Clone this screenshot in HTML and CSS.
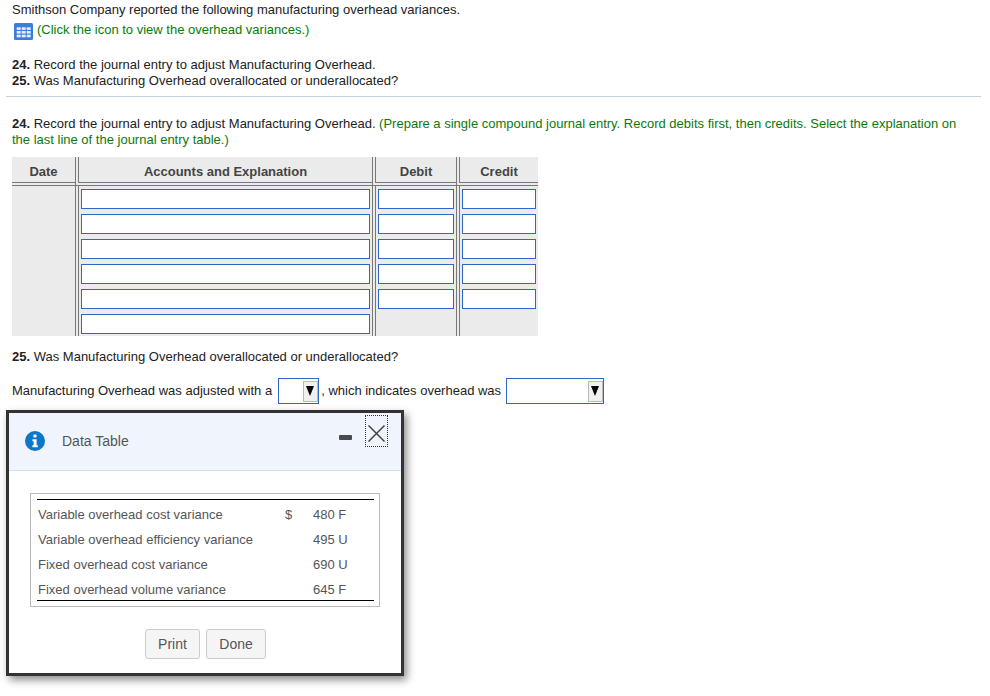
FILE: index.html
```html
<!DOCTYPE html>
<html lang="en">
<head>
    <meta charset="UTF-8">
    <title>Overhead variances</title>
    <link rel="stylesheet" href="styles.css">
</head>
<body>

<div class="question">
    <p class="intro">Smithson Company reported the following manufacturing overhead variances.</p>
    <p class="icon-line">
        <svg class="grid-icon" width="19" height="17" viewBox="0 0 19 17">
            <rect width="19" height="17" rx="1.5" fill="#3b7ddd"/>
            <g fill="#e4eefb">
                <rect x="2.7" y="4.3" width="4" height="2.6"/><rect x="7.7" y="4.3" width="4" height="2.6"/><rect x="12.7" y="4.3" width="4" height="2.6"/>
                <rect x="2.7" y="8" width="4" height="2.6"/><rect x="7.7" y="8" width="4" height="2.6"/><rect x="12.7" y="8" width="4" height="2.6"/>
                <rect x="2.7" y="11.7" width="4" height="2.6"/><rect x="7.7" y="11.7" width="4" height="2.6"/><rect x="12.7" y="11.7" width="4" height="2.6"/>
            </g>
        </svg>
        <span class="green">(Click the icon to view the overhead variances.)</span>
    </p>
    <p class="asks">
        <b>24.</b> Record the journal entry to adjust Manufacturing Overhead.<br>
        <b>25.</b> Was Manufacturing Overhead overallocated or underallocated?
    </p>
</div>

<hr class="divider">

<div class="answer">
    <p class="instructions">
        <b>24.</b> Record the journal entry to adjust Manufacturing Overhead.
        <span class="green">(Prepare a single compound journal entry. Record debits first, then credits. Select the explanation on the last line of the journal entry table.)</span>
    </p>

    <table class="journal">
        <thead>
            <tr>
                <th class="col-date">Date</th>
                <th class="col-account">Accounts and Explanation</th>
                <th class="col-debit">Debit</th>
                <th class="col-credit">Credit</th>
            </tr>
        </thead>
        <tbody>
            <tr><td></td><td><div class="box"></div></td><td><div class="box"></div></td><td><div class="box"></div></td></tr>
            <tr><td></td><td><div class="box"></div></td><td><div class="box"></div></td><td><div class="box"></div></td></tr>
            <tr><td></td><td><div class="box"></div></td><td><div class="box"></div></td><td><div class="box"></div></td></tr>
            <tr><td></td><td><div class="box"></div></td><td><div class="box"></div></td><td><div class="box"></div></td></tr>
            <tr><td></td><td><div class="box"></div></td><td><div class="box"></div></td><td><div class="box"></div></td></tr>
            <tr><td></td><td><div class="box"></div></td><td></td><td></td></tr>
        </tbody>
    </table>

    <p class="ask-25"><b>25.</b> Was Manufacturing Overhead overallocated or underallocated?</p>

    <div class="fill-line">
        <span>Manufacturing Overhead was adjusted with a</span>
        <div class="pick pick-short"><span class="pick-btn"></span></div>
        <span class="comma">, which indicates overhead was</span>
        <div class="pick pick-long"><span class="pick-btn"></span></div>
    </div>
</div>

<div class="dialog">
    <div class="dialog-head">
        <svg class="info-icon" width="20" height="20" viewBox="0 0 20 20">
            <circle cx="10" cy="10" r="10" fill="#0a77c9"/>
            <rect x="8.4" y="3.6" width="3.2" height="3" rx="1" fill="#fff"/>
            <path d="M7.4 8.2h4.2v6h1.2v2H7.4v-2h1.2v-4H7.4z" fill="#fff"/>
        </svg>
        <span class="dialog-title">Data Table</span>
        <span class="minimize"></span>
        <span class="close">
            <svg width="17" height="17" viewBox="0 0 17 17">
                <path d="M0.5 0.5L16.5 16.5M16.5 0.5L0.5 16.5" stroke="#444" stroke-width="1.5" fill="none"/>
            </svg>
        </span>
    </div>
    <div class="dialog-body">
        <div class="variance-frame">
            <table class="variances">
                <tr><td>Variable overhead cost variance</td><td class="cur">$</td><td class="amt">480 F</td></tr>
                <tr><td>Variable overhead efficiency variance</td><td class="cur"></td><td class="amt">495 U</td></tr>
                <tr><td>Fixed overhead cost variance</td><td class="cur"></td><td class="amt">690 U</td></tr>
                <tr><td>Fixed overhead volume variance</td><td class="cur"></td><td class="amt">645 F</td></tr>
            </table>
        </div>
        <div class="dialog-btns">
            <button class="btn btn-print">Print</button>
            <button class="btn btn-done">Done</button>
        </div>
    </div>
</div>

</body>
</html>
```

FILE: styles.css
```css
html, body {
    margin: 0;
    padding: 0;
}

body {
    font-family: "Liberation Sans", Arial, sans-serif;
    font-size: 13px;
    line-height: 16px;
    color: #222;
    background: #fff;
    height: 696px;
    overflow: hidden;
}

p {
    margin: 0;
}

b {
    font-weight: bold;
}

.green {
    color: #0a7a0a;
}

.question {
    padding: 2px 12px 0;
}

.icon-line {
    display: flex;
    align-items: center;
    gap: 4px;
    margin-top: 4px;
    height: 16px;
    padding-left: 2px;
}

.grid-icon {
    flex: none;
    margin-top: 3px;
}

.asks {
    margin-top: 19px;
}

.divider {
    border: 0;
    border-top: 1px solid #c8d0de;
    margin: 7px 9px 0 6px;
}

.answer {
    padding: 19px 12px 0;
}

.instructions {
    width: 960px;
}

.journal {
    border-collapse: separate;
    border-spacing: 0;
    table-layout: fixed;
    width: 526px;
    margin-top: 9px;
    background: #ebebeb;
}

.journal th {
    box-sizing: border-box;
    height: 29px;
    padding: 5px 0 0;
    color: #444;
    font-weight: bold;
    text-align: center;
    border-bottom: 4px double #777;
    border-left: 4px double #777;
}

.journal td {
    padding: 0 2px 5px;
    vertical-align: top;
    border-left: 4px double #777;
}

.journal tr > :first-child {
    border-left: 0;
}

.journal tbody tr:first-child td {
    padding-top: 3px;
}

.journal tbody tr:last-child td {
    padding-bottom: 2px;
}

.col-date {
    width: 63px;
}

.col-account {
    width: 297px;
}

.col-debit {
    width: 84px;
}

.col-credit {
    width: 82px;
}

.box {
    height: 20px;
    box-sizing: border-box;
    background: #fff;
    border: 1px solid #2f66c9;
}

.ask-25 {
    margin-top: 13px;
}

.fill-line {
    display: flex;
    align-items: center;
    margin-top: 13px;
    height: 26px;
}

.pick {
    box-sizing: border-box;
    height: 26px;
    margin-left: 6px;
    background: #fff;
    border: 1px solid #2f66c9;
    display: flex;
    justify-content: flex-end;
    align-items: center;
}

.pick-short {
    width: 41px;
}

.pick-long {
    width: 98px;
    margin-left: 5px;
}

.comma {
    margin-left: 2px;
}

.pick-btn {
    box-sizing: border-box;
    width: 15px;
    height: 21px;
    background: #f0f0f0;
    border: 1px solid #bbb;
    position: relative;
}

.pick-btn::after {
    content: "";
    position: absolute;
    left: 2px;
    top: 4px;
    border-left: 4.5px solid transparent;
    border-right: 4.5px solid transparent;
    border-top: 10px solid #000;
}

.dialog {
    position: absolute;
    left: 6px;
    top: 410px;
    width: 392px;
    height: 260px;
    border: 3px solid #333;
    background: #fff;
    box-shadow: 3px 4px 8px rgba(0, 0, 0, 0.45);
    color: #555;
}

.dialog-head {
    height: 58px;
    box-sizing: border-box;
    background: #f0f5fd;
    border-bottom: 1px solid #c5e3f9;
    position: relative;
    display: flex;
    align-items: center;
    padding: 0 0 1px 16px;
    font-size: 14px;
}

.info-icon {
    flex: none;
}

.dialog-title {
    margin-left: 17px;
}

.minimize {
    position: absolute;
    left: 330px;
    top: 22px;
    width: 13px;
    height: 5px;
    background: #4a4a4a;
    border-radius: 1px;
}

.close {
    position: absolute;
    left: 356px;
    top: 2px;
    width: 23px;
    height: 32px;
    box-sizing: border-box;
    border: 1px dotted #333;
    display: flex;
    justify-content: center;
    align-items: flex-end;
    padding-bottom: 4px;
}

.dialog-body {
    padding: 22px 21px 0;
}

.variance-frame {
    box-sizing: border-box;
    width: 350px;
    height: 114px;
    border: 1px solid #bbb;
    padding: 5px 5px 5px 6px;
}

.variances {
    width: 100%;
    border-collapse: separate;
    border-spacing: 0;
    border-top: 1px solid #000;
    border-bottom: 1px solid #000;
}

.variances td {
    box-sizing: border-box;
    height: 25px;
    padding: 4px 0 0 1px;
}

.variances .cur {
    width: 28px;
    padding-left: 0;
}

.variances .amt {
    width: 61px;
    padding-left: 0;
    text-align: left;
}

.dialog-btns {
    display: flex;
    gap: 6px;
    margin: 22px 0 0 115px;
}

.btn {
    height: 30px;
    padding: 0;
    font: 14px "Liberation Sans", Arial, sans-serif;
    color: #555;
    background: #f5f5f5;
    border: 1px solid #ccc;
    border-radius: 3px;
}

.btn-print {
    width: 55px;
}

.btn-done {
    width: 60px;
}
```
